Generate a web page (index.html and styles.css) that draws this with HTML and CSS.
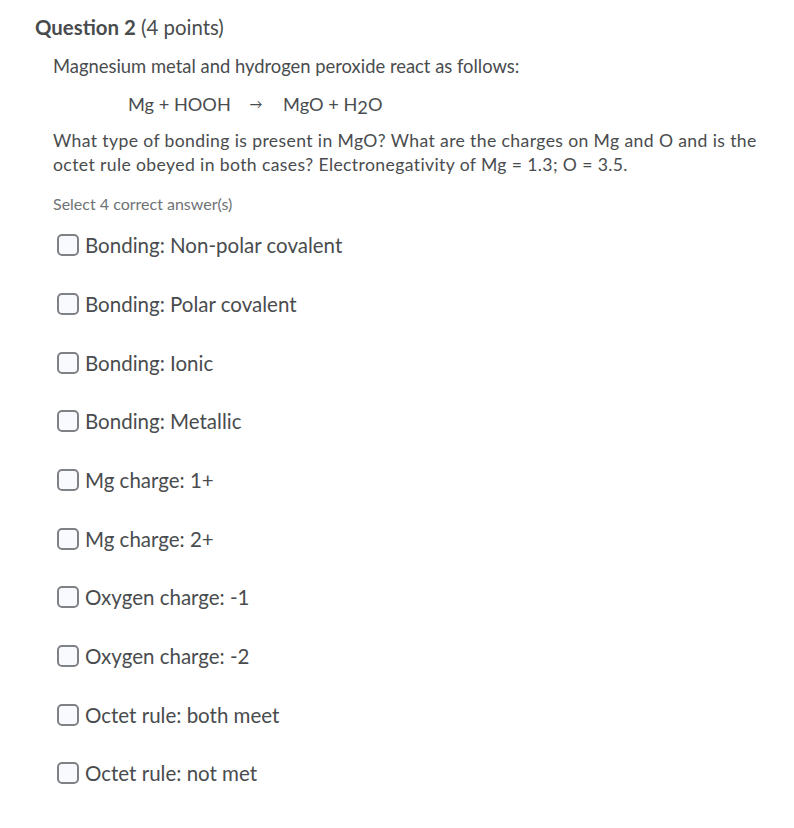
FILE: index.html
```html
<!DOCTYPE html>
<html>
<head>
<meta charset="utf-8">
<link rel="stylesheet" href="styles.css">
</head>
<body>
<div class="question">
  <h2 class="q-title"><strong>Question 2</strong> (4 points)</h2>
  <div class="q-body">
    <p class="intro">Magnesium metal and hydrogen peroxide react as follows:</p>
    <p class="equation">Mg + HOOH <span class="arrow">→</span> MgO + H<sub>2</sub>O</p>
    <p class="prompt">What type of bonding is present in MgO? What are the charges on Mg and O and is the octet rule obeyed in both cases? Electronegativity of Mg = 1.3; O = 3.5.</p>
    <p class="hint">Select 4 correct answer(s)</p>
    <ul class="options">
      <li class="option"><span class="box"></span><span class="label">Bonding: Non-polar covalent</span></li>
      <li class="option"><span class="box"></span><span class="label">Bonding: Polar covalent</span></li>
      <li class="option"><span class="box"></span><span class="label">Bonding: Ionic</span></li>
      <li class="option"><span class="box"></span><span class="label">Bonding: Metallic</span></li>
      <li class="option"><span class="box"></span><span class="label">Mg charge: 1+</span></li>
      <li class="option"><span class="box"></span><span class="label">Mg charge: 2+</span></li>
      <li class="option"><span class="box"></span><span class="label">Oxygen charge: -1</span></li>
      <li class="option"><span class="box"></span><span class="label">Oxygen charge: -2</span></li>
      <li class="option"><span class="box"></span><span class="label">Octet rule: both meet</span></li>
      <li class="option"><span class="box"></span><span class="label">Octet rule: not met</span></li>
    </ul>
  </div>
</div>
</body>
</html>
```
FILE: styles.css
```css
html, body {
  margin: 0;
  padding: 0;
  background: #ffffff;
}
body {
  font-family: Lato, "Open Sans", sans-serif;
  color: #494c4e;
}
.question {
  padding: 14px 0 0 35px;
}
.q-title {
  margin: 0;
  font-size: 20.4px;
  font-weight: 400;
  line-height: 26px;
  color: #494c4e;
}
.q-title strong {
  font-weight: 700;
}
.q-body {
  padding-left: 18px;
  padding-right: 16px;
}
.intro {
  margin: 14px 0 0;
  font-size: 18.4px;
  line-height: 24px;
}
.equation {
  margin: 14px 0 0 75px;
  font-size: 18.2px;
  line-height: 24px;
}
.equation .arrow {
  display: inline-block;
  font-size: 13px;
  margin: 0 16px 0 14px;
  vertical-align: 2px;
}
.equation sub {
  font-size: 18.2px;
  vertical-align: -3px;
  line-height: 0;
}
.prompt {
  margin: 13px 0 0;
  font-size: 17.6px;
  letter-spacing: 0.38px;
  line-height: 24px;
}
.hint {
  margin: 15px 0 0;
  font-size: 16px;
  line-height: 24px;
  color: #6e7376;
}
.options {
  list-style: none;
  margin: 0;
  padding: 0;
}
.option {
  display: flex;
  align-items: center;
  height: 58.67px;
}
.box {
  box-sizing: border-box;
  width: 22px;
  height: 22px;
  margin-left: 4px;
  margin-right: 6px;
  border: 2px solid #7f8285;
  border-radius: 5px;
  background: #f9fafe;
  flex: none;
}
.label {
  font-size: 20.5px;
  line-height: 24px;
}
```
